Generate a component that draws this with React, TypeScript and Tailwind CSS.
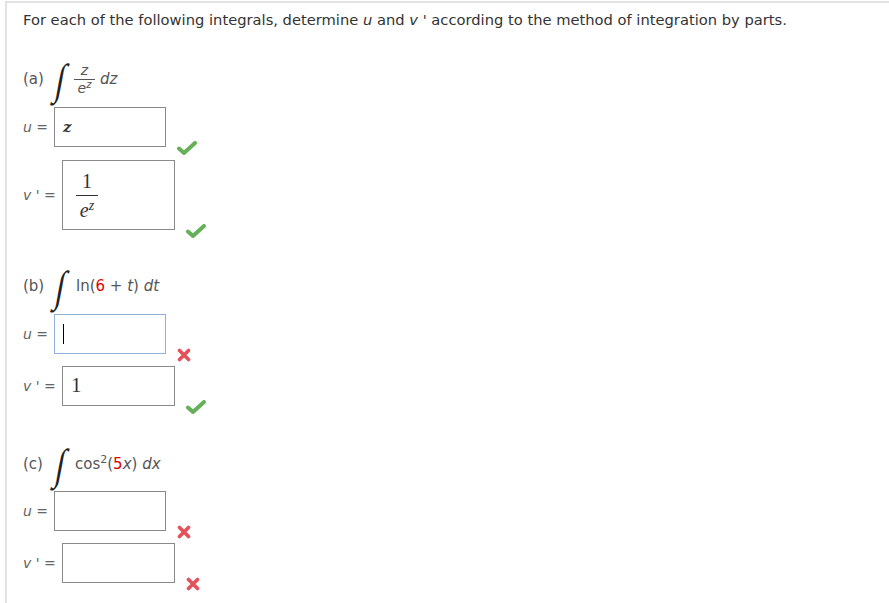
import type { ReactNode } from "react";

function Check() {
  return (
    <svg width="20" height="14" viewBox="0 0 20 14" className="shrink-0">
      <path d="M2 7.5 L7 12 L18 2" fill="none" stroke="#66b057" strokeWidth="4" strokeLinecap="round" strokeLinejoin="round" />
    </svg>
  );
}

function Cross() {
  return (
    <svg width="14" height="14" viewBox="0 0 14 14" className="shrink-0">
      <path d="M2.5 2.5 L11.5 11.5 M11.5 2.5 L2.5 11.5" fill="none" stroke="#e5515b" strokeWidth="3.6" strokeLinecap="round" />
    </svg>
  );
}

function Integral() {
  return (
    <span className="inline-block w-[14px] origin-center scale-y-[1.35] -skew-x-[14deg] text-center font-['Liberation_Serif',serif] text-[32px] leading-[40px] text-[#222]">
      ∫
    </span>
  );
}

interface RowProps {
  label: ReactNode;
  labelWidth: string;
  boxWidth: string;
  boxHeight: string;
  focused?: boolean;
  status: "ok" | "bad";
  iconLeft: string;
  children?: ReactNode;
  className?: string;
}

function AnswerRow({ label, labelWidth, boxWidth, boxHeight, focused, status, iconLeft, children, className }: RowProps) {
  return (
    <div className={`flex items-end ${className ?? ""}`}>
      <div className={`flex ${boxHeight} ${labelWidth} items-center text-[14px] text-[#666]`}>{label}</div>
      <div
        className={`flex ${boxHeight} ${boxWidth} items-center border ${
          focused ? "border-[#8eb2dc]" : "border-[#8a8a8a]"
        } bg-white px-[8px]`}
      >
        {children}
      </div>
      <div className={`${iconLeft} mb-[-8px]`}>{status === "ok" ? <Check /> : <Cross />}</div>
    </div>
  );
}

const uLabel = (
  <span>
    <i>u</i> =
  </span>
);
const vLabel = (
  <span>
    <i>v</i> ' =
  </span>
);

export default function App() {
  return (
    <div className="h-[603px] w-[889px] bg-white font-['DejaVu_Sans','Verdana',sans-serif]">
      <div className="ml-[5px] mt-[1px] h-[602px] border-l-2 border-t-2 border-[#e2e2e2] pl-[16px] pt-[7px] text-[#333]">
        <p className="text-[14.7px] leading-5">
          For each of the following integrals, determine <i>u</i> and <i>v</i> ' according to the method of integration by parts.
        </p>

        {/* (a) */}
        <div className="mt-[29px] flex h-[40px] items-center text-[15px] text-[#555]">
          <span className="w-[31px]">(a)</span>
          <Integral />
          <span className="ml-[6px] inline-flex flex-col items-center text-[14px] leading-[13px] italic">
            <span className="px-[2px]">z</span>
            <span className="my-[2px] h-px w-[21px] bg-[#555]" />
            <span>
              e<sup className="text-[10px]">z</sup>
            </span>
          </span>
          <span className="ml-[5px] italic">dz</span>
        </div>
        <AnswerRow className="mt-[8px]" label={uLabel} labelWidth="w-[31px]" boxWidth="w-[112px]" boxHeight="h-[40px]" status="ok" iconLeft="ml-[11px]">
          <span className="font-['DejaVu_Serif',serif] text-[15px] font-bold italic text-[#333]">z</span>
        </AnswerRow>
        <AnswerRow className="mt-[13px]" label={vLabel} labelWidth="w-[39px]" boxWidth="w-[113px]" boxHeight="h-[70px]" status="ok" iconLeft="ml-[11px]">
          <span className="ml-[5px] inline-flex flex-col items-center font-['Liberation_Serif',serif] text-[20px] leading-[22px] text-[#333]">
            <span>1</span>
            <span className="my-[3px] h-px w-[22px] bg-[#333]" />
            <span className="italic">
              e<sup className="text-[14px]">z</sup>
            </span>
          </span>
        </AnswerRow>

        {/* (b) */}
        <div className="mt-[36px] flex h-[40px] items-center text-[15px] text-[#555]">
          <span className="w-[31px]">(b)</span>
          <Integral />
          <span className="ml-[8px]">
            ln(<span className="text-[#e00000]">6</span> + <i>t</i>) <i>dt</i>
          </span>
        </div>
        <AnswerRow className="mt-[8px]" label={uLabel} labelWidth="w-[31px]" boxWidth="w-[112px]" boxHeight="h-[40px]" focused status="bad" iconLeft="ml-[11px]">
          <span className="h-[20px] w-px bg-black" />
        </AnswerRow>
        <AnswerRow className="mt-[12px]" label={vLabel} labelWidth="w-[39px]" boxWidth="w-[113px]" boxHeight="h-[40px]" status="ok" iconLeft="ml-[11px]">
          <span className="font-['Liberation_Serif',serif] text-[21px] text-[#333]">1</span>
        </AnswerRow>

        {/* (c) */}
        <div className="mt-[38px] flex h-[40px] items-center text-[15px] text-[#555]">
          <span className="w-[31px]">(c)</span>
          <Integral />
          <span className="ml-[7px]">
            cos<sup className="text-[11px]">2</sup>(<span className="text-[#e00000]">5</span>
            <i>x</i>) <i>dx</i>
          </span>
        </div>
        <AnswerRow className="mt-[7px]" label={uLabel} labelWidth="w-[31px]" boxWidth="w-[112px]" boxHeight="h-[40px]" status="bad" iconLeft="ml-[11px]" />
        <AnswerRow className="mt-[12px]" label={vLabel} labelWidth="w-[39px]" boxWidth="w-[113px]" boxHeight="h-[40px]" status="bad" iconLeft="ml-[11px]" />
      </div>
    </div>
  );
}
